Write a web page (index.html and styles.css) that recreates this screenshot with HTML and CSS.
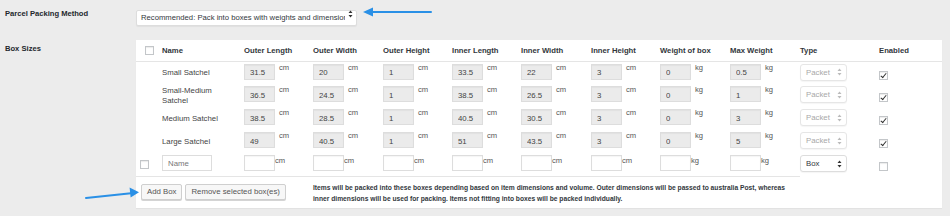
FILE: index.html
```html
<!DOCTYPE html>
<html lang="en">
<head>
  <meta charset="UTF-8">
  <title>Parcel Packing</title>
  <link rel="stylesheet" href="styles.css">
</head>
<body>

<div class="settings">
    <!-- packing method -->
    <div class="field field-method">
        <div class="label">Parcel Packing Method</div>
        <div class="select-wrap">
            <select class="method-select">
                <option>Recommended: Pack into boxes with weights and dimensions</option>
            </select>
            <svg class="updown" width="5" height="8" viewBox="0 0 5 8"><path d="M2.5 0.5 L4.5 3 L0.5 3 Z M2.5 7.5 L4.5 5 L0.5 5 Z" fill="#333"/></svg>
        </div>
    </div>

    <!-- box sizes -->
    <div class="field field-boxes">
        <div class="label">Box Sizes</div>
        <div class="panel">
            <table class="boxes">
                <colgroup>
                    <col style="width:26px"><col style="width:82px">
                    <col style="width:69px"><col style="width:70px"><col style="width:69px"><col style="width:69px">
                    <col style="width:70px"><col style="width:69px"><col style="width:70px"><col style="width:70px">
                    <col style="width:79px"><col style="width:63px">
                </colgroup>
                <thead>
                    <tr>
                        <th class="check-col"><input type="checkbox" class="cb"></th>
                        <th>Name</th>
                        <th>Outer Length</th>
                        <th>Outer Width</th>
                        <th>Outer Height</th>
                        <th>Inner Length</th>
                        <th>Inner Width</th>
                        <th>Inner Height</th>
                        <th>Weight of box</th>
                        <th>Max Weight</th>
                        <th>Type</th>
                        <th>Enabled</th>
                    </tr>
                </thead>
                <tbody>
                    <tr>
                        <td></td>
                        <td class="name">Small Satchel</td>
                        <td><div class="dim"><input class="num" value="31.5" readonly><span class="unit">cm</span></div></td>
                        <td><div class="dim"><input class="num" value="20" readonly><span class="unit">cm</span></div></td>
                        <td><div class="dim"><input class="num" value="1" readonly><span class="unit">cm</span></div></td>
                        <td><div class="dim"><input class="num" value="33.5" readonly><span class="unit">cm</span></div></td>
                        <td><div class="dim"><input class="num" value="22" readonly><span class="unit">cm</span></div></td>
                        <td><div class="dim"><input class="num" value="3" readonly><span class="unit">cm</span></div></td>
                        <td><div class="dim"><input class="num" value="0" readonly><span class="unit">kg</span></div></td>
                        <td><div class="dim"><input class="num" value="0.5" readonly><span class="unit">kg</span></div></td>
                        <td><div class="type-select disabled">Packet<svg class="updown" width="5" height="8" viewBox="0 0 5 8"><path d="M2.5 0.5 L4.5 3 L0.5 3 Z M2.5 7.5 L4.5 5 L0.5 5 Z" fill="#bbb"/></svg></div></td>
                        <td class="enabled"><input type="checkbox" class="cb" checked></td>
                    </tr>
                    <tr>
                        <td></td>
                        <td class="name">Small-Medium<br>Satchel</td>
                        <td><div class="dim"><input class="num" value="36.5" readonly><span class="unit">cm</span></div></td>
                        <td><div class="dim"><input class="num" value="24.5" readonly><span class="unit">cm</span></div></td>
                        <td><div class="dim"><input class="num" value="1" readonly><span class="unit">cm</span></div></td>
                        <td><div class="dim"><input class="num" value="38.5" readonly><span class="unit">cm</span></div></td>
                        <td><div class="dim"><input class="num" value="26.5" readonly><span class="unit">cm</span></div></td>
                        <td><div class="dim"><input class="num" value="3" readonly><span class="unit">cm</span></div></td>
                        <td><div class="dim"><input class="num" value="0" readonly><span class="unit">kg</span></div></td>
                        <td><div class="dim"><input class="num" value="1" readonly><span class="unit">kg</span></div></td>
                        <td><div class="type-select disabled">Packet<svg class="updown" width="5" height="8" viewBox="0 0 5 8"><path d="M2.5 0.5 L4.5 3 L0.5 3 Z M2.5 7.5 L4.5 5 L0.5 5 Z" fill="#bbb"/></svg></div></td>
                        <td class="enabled"><input type="checkbox" class="cb" checked></td>
                    </tr>
                    <tr>
                        <td></td>
                        <td class="name">Medium Satchel</td>
                        <td><div class="dim"><input class="num" value="38.5" readonly><span class="unit">cm</span></div></td>
                        <td><div class="dim"><input class="num" value="28.5" readonly><span class="unit">cm</span></div></td>
                        <td><div class="dim"><input class="num" value="1" readonly><span class="unit">cm</span></div></td>
                        <td><div class="dim"><input class="num" value="40.5" readonly><span class="unit">cm</span></div></td>
                        <td><div class="dim"><input class="num" value="30.5" readonly><span class="unit">cm</span></div></td>
                        <td><div class="dim"><input class="num" value="3" readonly><span class="unit">cm</span></div></td>
                        <td><div class="dim"><input class="num" value="0" readonly><span class="unit">kg</span></div></td>
                        <td><div class="dim"><input class="num" value="3" readonly><span class="unit">kg</span></div></td>
                        <td><div class="type-select disabled">Packet<svg class="updown" width="5" height="8" viewBox="0 0 5 8"><path d="M2.5 0.5 L4.5 3 L0.5 3 Z M2.5 7.5 L4.5 5 L0.5 5 Z" fill="#bbb"/></svg></div></td>
                        <td class="enabled"><input type="checkbox" class="cb" checked></td>
                    </tr>
                    <tr>
                        <td></td>
                        <td class="name">Large Satchel</td>
                        <td><div class="dim"><input class="num" value="49" readonly><span class="unit">cm</span></div></td>
                        <td><div class="dim"><input class="num" value="40.5" readonly><span class="unit">cm</span></div></td>
                        <td><div class="dim"><input class="num" value="1" readonly><span class="unit">cm</span></div></td>
                        <td><div class="dim"><input class="num" value="51" readonly><span class="unit">cm</span></div></td>
                        <td><div class="dim"><input class="num" value="43.5" readonly><span class="unit">cm</span></div></td>
                        <td><div class="dim"><input class="num" value="3" readonly><span class="unit">cm</span></div></td>
                        <td><div class="dim"><input class="num" value="0" readonly><span class="unit">kg</span></div></td>
                        <td><div class="dim"><input class="num" value="5" readonly><span class="unit">kg</span></div></td>
                        <td><div class="type-select disabled">Packet<svg class="updown" width="5" height="8" viewBox="0 0 5 8"><path d="M2.5 0.5 L4.5 3 L0.5 3 Z M2.5 7.5 L4.5 5 L0.5 5 Z" fill="#bbb"/></svg></div></td>
                        <td class="enabled"><input type="checkbox" class="cb" checked></td>
                    </tr>
                    <tr class="new-box">
                        <td class="check-new"><input type="checkbox" class="cb"></td>
                        <td><input class="name-input" placeholder="Name"></td>
                        <td><div class="dim"><input class="num"><span class="unit">cm</span></div></td>
                        <td><div class="dim"><input class="num"><span class="unit">cm</span></div></td>
                        <td><div class="dim"><input class="num"><span class="unit">cm</span></div></td>
                        <td><div class="dim"><input class="num"><span class="unit">cm</span></div></td>
                        <td><div class="dim"><input class="num"><span class="unit">cm</span></div></td>
                        <td><div class="dim"><input class="num"><span class="unit">cm</span></div></td>
                        <td><div class="dim"><input class="num"><span class="unit">kg</span></div></td>
                        <td><div class="dim"><input class="num"><span class="unit">kg</span></div></td>
                        <td><div class="type-select">Box<svg class="updown" width="5" height="8" viewBox="0 0 5 8"><path d="M2.5 0.5 L4.5 3 L0.5 3 Z M2.5 7.5 L4.5 5 L0.5 5 Z" fill="#333"/></svg></div></td>
                        <td class="enabled"><input type="checkbox" class="cb"></td>
                    </tr>
                </tbody>
                <tfoot>
                    <tr>
                        <td colspan="3" class="actions">
                            <div class="buttons">
                                <button class="btn">Add Box</button>
                                <button class="btn">Remove selected box(es)</button>
                            </div>
                        </td>
                        <td colspan="7" class="note">Items will be packed into these boxes depending based on item dimensions and volume. Outer dimensions will be passed to australia Post, whereas inner dimensions will be used for packing. Items not fitting into boxes will be packed individually.</td>
                        <td colspan="2" class="blank"></td>
                    </tr>
                </tfoot>
            </table>
        </div>
    </div>

    <!-- pointers -->
    <svg class="pointer pointer-top" width="70" height="12" viewBox="0 0 70 12">
        <line x1="68" y1="6" x2="8" y2="6" stroke="#2a90e6" stroke-width="2" stroke-linecap="round"/>
        <path d="M0 6 L10 1.5 L10 10.5 Z" fill="#2a90e6"/>
    </svg>
    <svg class="pointer pointer-bottom" width="56" height="16" viewBox="0 0 56 16">
        <line x1="1" y1="13" x2="46" y2="8.2" stroke="#2a90e6" stroke-width="2" stroke-linecap="round"/>
        <path d="M54 7.3 L44.6 2.6 L45.6 12.6 Z" fill="#2a90e6"/>
    </svg>
</div>

</body>
</html>
```

FILE: styles.css
```css
* {
    font-family: "Liberation Sans", Arial, Helvetica, sans-serif;
    box-sizing: border-box;
}

body {
    margin: 0;
    background-color: #ececec;
    color: #32373c;
}

.settings {
    position: relative;
    width: 950px;
    height: 216px;
    padding-left: 5px;
}

.field {
    display: flex;
}

.label {
    width: 131px;
    font-size: 7.6px;
    font-weight: bold;
    color: #23282d;
}

.field-method {
    padding-top: 6px;
}

.field-method .label {
    line-height: 15px;
}

.field-boxes {
    margin-top: 18px;
}

.field-boxes .label {
    padding-top: 4px;
    line-height: 9px;
}

/* select */
.select-wrap {
    position: relative;
    width: 221px;
    height: 16px;
}

.method-select {
    -webkit-appearance: none;
    appearance: none;
    width: 100%;
    height: 16px;
    margin: 0;
    padding: 0 11px 0 4px;
    border: 1px solid #ddd;
    border-radius: 2px;
    background: #fff;
    font-size: 7.7px;
    color: #32373c;
    box-shadow: 0 1px 1px rgba(0,0,0,0.05);
}

.select-wrap .updown {
    position: absolute;
    right: 4px;
    top: 4px;
}

/* panel */
.panel {
    width: 806px;
    height: 168px;
    background: #fff;
    box-shadow: 0 1px 1px rgba(0,0,0,0.04);
}

.boxes {
    width: 806px;
    border-collapse: collapse;
    table-layout: fixed;
}

.boxes th {
    height: 21px;
    padding: 0;
    text-align: left;
    font-size: 7.7px;
    font-weight: bold;
    color: #32373c;
    vertical-align: middle;
    border-bottom: 1px solid #e5e5e5;
}

.boxes th.check-col {
    padding-left: 9px;
}

.boxes tbody td {
    height: 23px;
    padding: 2px 0 0 0;
    vertical-align: top;
    font-size: 7.8px;
    color: #444;
}

.boxes tbody td.name {
    vertical-align: middle;
    padding-top: 0;
    line-height: 10px;
}

.cb {
    -webkit-appearance: none;
    appearance: none;
    position: relative;
    display: block;
    width: 9px;
    height: 9px;
    margin: 0;
    border: 1px solid #c3c6c9;
    background: #fff;
    box-shadow: inset 0 1px 1px rgba(0,0,0,0.08);
}

.cb:checked::before {
    content: "";
    position: absolute;
    left: 2.4px;
    top: 0px;
    width: 2.4px;
    height: 5px;
    border-right: 1.5px solid #333;
    border-bottom: 1.5px solid #333;
    transform: rotate(40deg);
}

.dim {
    display: flex;
    align-items: flex-start;
}

.num {
    width: 31px;
    height: 16px;
    margin: 0;
    padding: 0 0 0 5px;
    border: 1px solid #ddd;
    background: #fff;
    font-size: 7.8px;
    color: #444;
    box-shadow: inset 0 1px 1px rgba(0,0,0,0.04);
}

.num[readonly] {
    background: #ebebeb;
    padding-top: 2px;
}

.unit {
    margin-left: 4px;
    font-size: 7.6px;
    line-height: 8px;
    color: #555;
}

.new-box .unit {
    margin-left: 0;
    margin-top: 2px;
}

.check-new {
    padding-left: 4px !important;
}

.check-new .cb {
    margin-top: 5px;
}

.name-input {
    width: 50px;
    height: 16px;
    margin: 0;
    padding: 0 0 0 5px;
    border: 1px solid #ddd;
    font-size: 7.8px;
    color: #444;
}

.name-input::placeholder {
    color: #777;
}

.type-select {
    display: flex;
    align-items: center;
    justify-content: space-between;
    width: 47px;
    height: 17px;
    padding: 0 4px 0 5px;
    border: 1px solid #ddd;
    border-radius: 3px;
    background: #fff;
    font-size: 7.8px;
    color: #32373c;
    box-shadow: 0 1px 1px rgba(0,0,0,0.04);
}

.type-select.disabled {
    color: #a8a8a8;
    border-color: #e6e6e6;
}

.boxes tbody td.enabled {
    padding-top: 9px;
}

.new-box td.enabled {
    padding-top: 8px;
}

/* footer */
.boxes tfoot td {
    padding: 0;
    vertical-align: top;
}

.boxes tfoot td.actions,
.boxes tfoot td.note {
    border-top: 1px solid #e5e5e5;
}

.boxes tfoot td.actions {
    padding: 7px 0 0 5px;
}

.buttons {
    display: flex;
    gap: 3px;
}

.btn {
    height: 16px;
    margin: 0;
    padding: 0 5px;
    border: 1px solid #cfcfcf;
    border-radius: 2px;
    background: #f7f7f7;
    box-shadow: 0 1px 0 #d4d4d4;
    font-size: 7.8px;
    color: #555;
    white-space: nowrap;
}

.boxes tfoot td.note {
    padding: 5px 14px 0 0;
    font-size: 6.7px;
    font-weight: bold;
    line-height: 11px;
    color: #32373c;
}

/* arrows */
.pointer {
    position: absolute;
}

.pointer-top {
    left: 363px;
    top: 6px;
}

.pointer-bottom {
    left: 85px;
    top: 185px;
}
```
